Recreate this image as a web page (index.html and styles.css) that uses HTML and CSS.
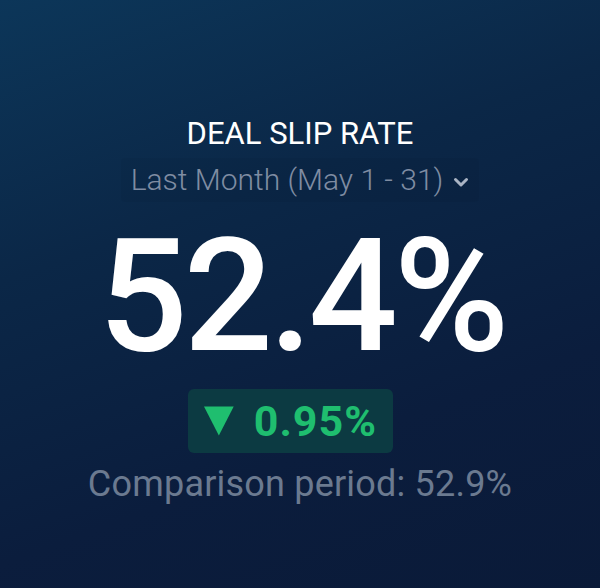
FILE: index.html
```html
<!DOCTYPE html>
<html>
<head>
<meta charset="utf-8">
<link rel="stylesheet" href="styles.css">
</head>
<body>
<main class="card">
  <h1 class="title">DEAL SLIP RATE</h1>
  <div class="period">
    <span class="period-text">Last Month (May 1 - 31)</span>
    <svg class="chevron" width="16" height="12" viewBox="0 0 16 12"><path d="M2.5 3.5 L8 9 L13.5 3.5" fill="none" stroke="currentColor" stroke-width="3" stroke-linecap="round" stroke-linejoin="round"/></svg>
  </div>
  <div class="value">52.4%</div>
  <div class="delta">
    <svg class="tri" width="31" height="30" viewBox="0 0 31 30"><polygon points="0,0 31,0 15.5,30" fill="currentColor"/></svg>
    <span class="delta-text">0.95%</span>
  </div>
  <div class="compare">Comparison period: 52.9%</div>
</main>
</body>
</html>
```
FILE: styles.css
```css
html, body {
  margin: 0;
  padding: 0;
  height: 100%;
}
body {
  background: linear-gradient(160deg, #0c3659 0%, #0b2747 35%, #0b1d3d 70%, #0a1a38 100%);
  font-family: Roboto, "Noto Sans", sans-serif;
  overflow: hidden;
}
.card {
  display: flex;
  flex-direction: column;
  align-items: center;
  padding-top: 116px;
}
.title {
  margin: 0;
  font-size: 31px;
  font-weight: 400;
  color: #ffffff;
  line-height: 36px;
}
.period {
  margin-top: 6px;
  display: flex;
  align-items: center;
  gap: 10px;
  padding: 4px 10px;
  border-radius: 4px;
  background: rgba(0, 0, 0, 0.03);
  color: #7f8ca2;
}
.period-text {
  font-size: 30px;
  font-weight: 300;
  line-height: 36px;
}
.chevron {
  color: #aab4c4;
  margin-top: 4px;
}
.value {
  margin-top: 14px;
  font-size: 157px;
  font-weight: 500;
  color: #ffffff;
  line-height: 160px;
  letter-spacing: -4px;
  padding-left: 4px;
}
.delta {
  margin-top: 13px;
  margin-right: 19px;
  display: flex;
  align-items: center;
  gap: 20px;
  padding: 0 16px;
  height: 64px;
  width: 205px;
  box-sizing: border-box;
  border-radius: 6px;
  background: #0c3a42;
  color: #1fbe6f;
}
.delta-text {
  font-size: 43px;
  font-weight: 700;
  letter-spacing: 1px;
}
.compare {
  margin-top: 10px;
  font-size: 36px;
  font-weight: 400;
  color: #6b7a90;
  line-height: 42px;
  letter-spacing: 0.2px;
}
```
